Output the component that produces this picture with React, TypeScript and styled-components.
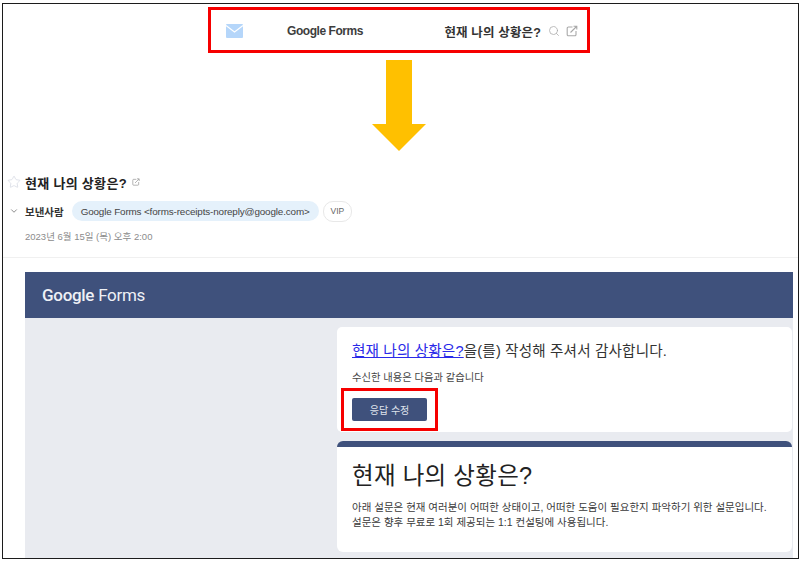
import styled, { createGlobalStyle } from "styled-components";
import { ChevronDown, Search, Star } from "lucide-react";

const FONT = `"Liberation Sans", "Noto Sans CJK KR", sans-serif`;

const GlobalStyle = createGlobalStyle`
  html, body {
    margin: 0;
    padding: 0;
    background: #fff;
  }
  body {
    font-family: ${FONT};
  }
`;

const Frame = styled.div`
  box-sizing: border-box;
  width: 800px;
  height: 562px;
  margin: 0;
  padding-top: 3px;
  overflow: hidden;
`;

const Inner = styled.div`
  box-sizing: border-box;
  width: 797px;
  height: 556px;
  margin-left: 2px;
  border: 1px solid #1c1c1c;
  overflow: hidden;
  background: #fff;
`;

const Callout = styled.div`
  box-sizing: border-box;
  display: flex;
  align-items: center;
  width: 382px;
  height: 46px;
  margin: 3px 0 0 205px;
  padding: 2px 9px 0 15px;
  border: 3px solid #f60000;
`;

const Subject = styled.span`
  font-size: 12.5px;
  font-weight: 700;
  color: #333;
  letter-spacing: 0.15px;
`;

const Sender = styled.span`
  flex: 1;
  padding-left: 44px;
  font-size: 12px;
  font-weight: 700;
  color: #3d3d3d;
  letter-spacing: -0.45px;
`;

const ToolIcons = styled.span`
  display: flex;
  align-items: center;
  gap: 6px;
  margin-left: 7px;
  color: #a8a8a8;
`;

const TitleIcon = styled.span`
  display: flex;
  margin-left: 1px;
  color: #9a9a9a;
`;

const ArrowWrap = styled.div`
  display: flex;
  justify-content: center;
  height: 92px;
  margin: 7px 0 0 -3px;
`;

const MailHead = styled.div`
  display: flex;
  flex-direction: column;
  height: 85px;
  margin-top: 20px;
  border-bottom: 1px solid #f0f0f0;
`;

const TitleRow = styled.div`
  display: flex;
  align-items: center;
  height: 20px;
  padding-left: 4px;
  gap: 4px;
`;

const MailTitle = styled.span`
  font-size: 13px;
  font-weight: 700;
  color: #222;
  letter-spacing: 0.3px;
`;

const SenderRow = styled.div`
  display: flex;
  align-items: center;
  height: 22px;
  margin-top: 8px;
  padding-left: 6px;
`;

const SenderLabel = styled.span`
  margin-left: 6px;
  font-size: 10.5px;
  font-weight: 700;
  color: #333;
`;

const AddressChip = styled.span`
  display: inline-flex;
  align-items: center;
  height: 20px;
  margin-left: 8px;
  padding: 0 9px;
  border-radius: 10px;
  background: #e5f1fb;
  font-size: 9.9px;
  color: #444;
  white-space: nowrap;
  letter-spacing: -0.15px;
`;

const VipChip = styled.span`
  display: inline-flex;
  align-items: center;
  height: 19px;
  margin-left: 4px;
  padding: 0 7px;
  border: 1px solid #e8e8e8;
  border-radius: 10px;
  font-size: 8.5px;
  color: #666;
`;

const DateLine = styled.div`
  margin: 7px 0 0 22px;
  font-size: 9.5px;
  color: #8c8c8c;
`;

const Body = styled.div`
  margin: 14px 5px 0 22px;
  background: #e9ebf0;
  height: 300px;
`;

const Banner = styled.div`
  display: flex;
  align-items: center;
  height: 46px;
  padding-left: 17px;
  background: #3f517c;
  color: #eef0f5;
  font-family: Roboto, sans-serif;
  font-size: 17px;
  letter-spacing: -0.3px;
`;

const LogoWord = styled.span`
  font-weight: 500;
  margin-right: 4px;
`;

const Column = styled.div`
  display: flex;
  flex-direction: column;
  gap: 9px;
  width: 455px;
  margin: 9px 0 0 312px;
`;

const Card = styled.div`
  box-sizing: border-box;
  height: 105px;
  padding: 14px 15px;
  border-radius: 5px;
  background: #fff;
`;

const Thanks = styled.div`
  font-size: 14.6px;
  line-height: 20px;
  color: #333;
  letter-spacing: 0.15px;
`;

const FormLink = styled.a`
  color: #2a2ae8;
  text-decoration: underline;
`;

const Received = styled.div`
  margin-top: 8px;
  font-size: 10.3px;
  color: #444;
`;

const ButtonCallout = styled.div`
  box-sizing: border-box;
  display: flex;
  align-items: center;
  justify-content: center;
  width: 97px;
  height: 43px;
  margin: 4px 0 0 -11px;
  border: 3px solid #f60000;
`;

const EditButton = styled.div`
  display: flex;
  align-items: center;
  justify-content: center;
  width: 75px;
  height: 23px;
  border-radius: 2px;
  background: #3f517c;
  color: #dfe3ec;
  font-size: 10px;
`;

const FormCard = styled.div`
  box-sizing: border-box;
  height: 111px;
  padding: 13px 15px;
  border-top: 6px solid #3f517c;
  border-radius: 6px;
  background: #fff;
`;

const FormTitle = styled.div`
  font-size: 23.5px;
  line-height: 32px;
  color: #222;
  letter-spacing: 0.3px;
`;

const FormDesc = styled.div`
  margin-top: 8px;
  font-size: 10.5px;
  line-height: 14.7px;
  color: #3a3a3a;
  white-space: nowrap;
`;

const MailIcon = () => (
  <svg width="17" height="14" viewBox="0 0 17 14">
    <rect width="17" height="14" rx="1" fill="#b5d6fa" />
    <path d="M0 1.5 8.5 8 17 1.5" fill="none" stroke="#fff" strokeWidth="1.2" />
  </svg>
);

const PopoutIcon = ({ size }: { size: number }) => (
  <svg width={size} height={size} viewBox="0 0 12 12" fill="none" stroke="currentColor" strokeWidth="1.1">
    <path d="M6.5 2H2.5A1.2 1.2 0 0 0 1.2 3.2v6.3a1.2 1.2 0 0 0 1.3 1.3h6.3A1.2 1.2 0 0 0 10 9.5V6" />
    <path d="M4.5 7.5 10.5 1.5M7.5 1.2h3.3v3.3" />
  </svg>
);

const DownArrow = () => (
  <svg width="54" height="92" viewBox="0 0 54 92">
    <path d="M14 0h26v64h14L27 91 0 64h14z" fill="#ffc000" />
  </svg>
);

export default function App() {
  return (
    <>
      <GlobalStyle />
      <Frame>
        <Inner>
          <Callout>
            <MailIcon />
            <Sender>Google Forms</Sender>
            <Subject>현재 나의 상황은?</Subject>
            <ToolIcons>
              <Search size={12} strokeWidth={1.5} />
              <PopoutIcon size={12} />
            </ToolIcons>
          </Callout>
          <ArrowWrap>
            <DownArrow />
          </ArrowWrap>
          <MailHead>
            <TitleRow>
              <Star size={14} color="#d5d9e2" strokeWidth={1.3} />
              <MailTitle>현재 나의 상황은?</MailTitle>
              <TitleIcon>
                <PopoutIcon size={8} />
              </TitleIcon>
            </TitleRow>
            <SenderRow>
              <ChevronDown size={10} color="#777" />
              <SenderLabel>보낸사람</SenderLabel>
              <AddressChip>Google Forms &lt;forms-receipts-noreply@google.com&gt;</AddressChip>
              <VipChip>VIP</VipChip>
            </SenderRow>
            <DateLine>2023년 6월 15일 (목) 오후 2:00</DateLine>
          </MailHead>
          <Body>
            <Banner>
              <LogoWord>Google</LogoWord>Forms
            </Banner>
            <Column>
              <Card>
                <Thanks>
                  <FormLink href="#">현재 나의 상황은?</FormLink>을(를) 작성해 주셔서 감사합니다.
                </Thanks>
                <Received>수신한 내용은 다음과 같습니다</Received>
                <ButtonCallout>
                  <EditButton>응답 수정</EditButton>
                </ButtonCallout>
              </Card>
              <FormCard>
                <FormTitle>현재 나의 상황은?</FormTitle>
                <FormDesc>
                  아래 설문은 현재 여러분이 어떠한 상태이고, 어떠한 도움이 필요한지 파악하기 위한 설문입니다.
                  <br />
                  설문은 향후 무료로 1회 제공되는 1:1 컨설팅에 사용됩니다.
                </FormDesc>
              </FormCard>
            </Column>
          </Body>
        </Inner>
      </Frame>
    </>
  );
}
